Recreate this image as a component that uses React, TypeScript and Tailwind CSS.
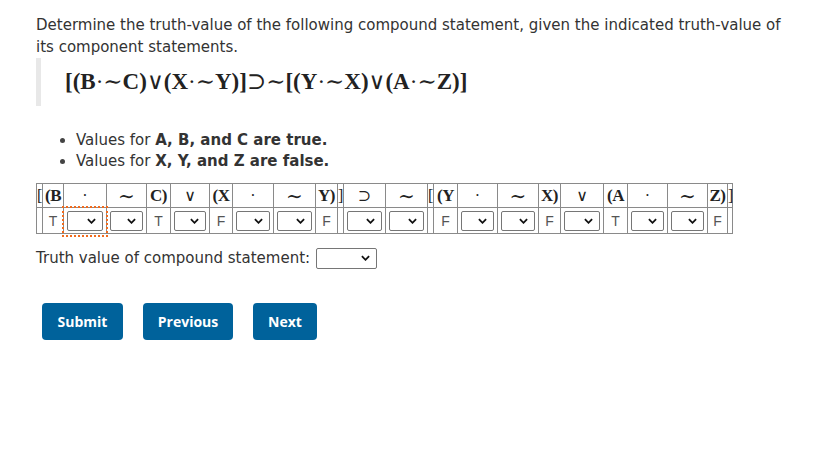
import React from "react"

type Cell = { head: string; bold?: boolean; w: number; val?: string; sel?: boolean }

const cols: Cell[] = [
  { head: "[", w: 6 },
  { head: "(B", bold: true, w: 21, val: "T" },
  { head: "·", w: 43, sel: true },
  { head: "∼", w: 40, sel: true },
  { head: "C)", bold: true, w: 24, val: "T" },
  { head: "∨", w: 39, sel: true },
  { head: "(X", bold: true, w: 23, val: "F" },
  { head: "·", w: 41, sel: true },
  { head: "∼", w: 42, sel: true },
  { head: "Y)", bold: true, w: 22, val: "F" },
  { head: "]", w: 6 },
  { head: "⊃", w: 42, sel: true },
  { head: "∼", w: 42, sel: true },
  { head: "[", w: 6 },
  { head: "(Y", bold: true, w: 24, val: "F" },
  { head: "·", w: 40, sel: true },
  { head: "∼", w: 41, sel: true },
  { head: "X)", bold: true, w: 22, val: "F" },
  { head: "∨", w: 43, sel: true },
  { head: "(A", bold: true, w: 24, val: "T" },
  { head: "·", w: 40, sel: true },
  { head: "∼", w: 40, sel: true },
  { head: "Z)", bold: true, w: 20, val: "F" },
  { head: "]", w: 5 },
]

// formula pieces: [text, isOperator]
const formula: [string, boolean][] = [
  ["[(B", false], ["·∼", true], ["C)", false], ["∨", true], ["(X", false], ["·∼", true], ["Y)]", false],
  ["⊃∼", true], ["[(Y", false], ["·∼", true], ["X)", false], ["∨", true], ["(A", false], ["·∼", true], ["Z)]", false],
]

function Chevron() {
  return (
    <svg viewBox="0 0 10 6" className="pointer-events-none absolute right-[7px] top-1/2 h-[6px] w-[9px] -translate-y-1/2">
      <path d="M1 1l4 4 4-4" fill="none" stroke="#111" strokeWidth="2" />
    </svg>
  )
}

function Select({ focus, className }: { focus?: boolean; className?: string }) {
  return (
    <div className={`relative ${className ?? ""}`}>
      <select
        defaultValue=""
        className="block h-full w-full appearance-none rounded-[2px] border border-[#767676] bg-white outline-none"
      >
        <option value=""></option>
        <option value="T">T</option>
        <option value="F">F</option>
      </select>
      <Chevron />
      {focus && (
        <div className="pointer-events-none absolute -left-[5px] -right-[5px] -top-[5px] -bottom-[6px] border-2 border-dotted border-[#f26b1d]" />
      )}
    </div>
  )
}

export default function App() {
  return (
    <div className="min-h-[455px] bg-white pl-[36px] pt-[14px] text-[15px] leading-[22px] text-[#333] [font-family:'DejaVu_Sans',Verdana,sans-serif]">
      <p className="w-[760px]">
        Determine the truth-value of the following compound statement, given the indicated truth-value of its
        component statements.
      </p>

      <div className="flex h-[48px] items-center border-l-[5px] border-[#e8e8e8] pl-[24px]">
        <span className="text-[23px] text-[#222] [font-family:'Liberation_Serif','DejaVu_Serif',serif]">
          {formula.map(([t, op], i) => (
            <span key={i} className={op ? "font-normal" : "font-bold"}>
              {t}
            </span>
          ))}
        </span>
      </div>

      <ul className="mt-[24px] list-disc pl-[40px] leading-[21px] marker:text-[#444]">
        <li>
          Values for <b>A, B, and C are true.</b>
        </li>
        <li>
          Values for <b>X, Y, and Z are false.</b>
        </li>
      </ul>

      <table className="mt-[11px] table-fixed border-collapse border border-[#8a8a8a]" style={{ width: 696 }}>
        <colgroup>
          {cols.map((c, i) => (
            <col key={i} style={{ width: c.w }} />
          ))}
        </colgroup>
        <tbody>
          <tr className="h-[24px]">
            {cols.map((c, i) => (
              <td
                key={i}
                className={`whitespace-nowrap border border-[#8a8a8a] p-0 text-center leading-[22px] text-[#222] [font-family:'Liberation_Serif','DejaVu_Serif',serif] ${
                  c.bold ? "text-[17px] font-bold tracking-[-0.5px]" : c.head === "∼" ? "text-[20px] font-normal" : "text-[16px] font-normal"
                } ${c.w < 10 ? "text-left" : ""}`}
              >
                {c.head}
              </td>
            ))}
          </tr>
          <tr className="h-[26px]">
            {cols.map((c, i) => (
              <td
                key={i}
                className="border border-[#8a8a8a] p-0 text-center text-[14px] text-[#555] [font-family:'Liberation_Sans',Arial,sans-serif]"
              >
                {c.sel ? (
                  <Select focus={i === 2} className="mx-auto h-[20px] w-[calc(100%-6px)]" />
                ) : (
                  c.val ?? ""
                )}
              </td>
            ))}
          </tr>
        </tbody>
      </table>

      <div className="mt-[13px] flex items-center gap-[6px]">
        <span>Truth value of compound statement:</span>
        <Select className="h-[21px] w-[61px]" />
      </div>

      <div className="mt-[34px] flex gap-[20px] pl-[6px] text-[14px] font-bold text-white [font-family:'Open_Sans',sans-serif]">
        <button className="h-[37px] w-[81px] rounded-[4px] bg-[#00629b]">Submit</button>
        <button className="h-[37px] w-[90px] rounded-[4px] bg-[#00629b]">Previous</button>
        <button className="h-[37px] w-[64px] rounded-[4px] bg-[#00629b]">Next</button>
      </div>
    </div>
  )
}
